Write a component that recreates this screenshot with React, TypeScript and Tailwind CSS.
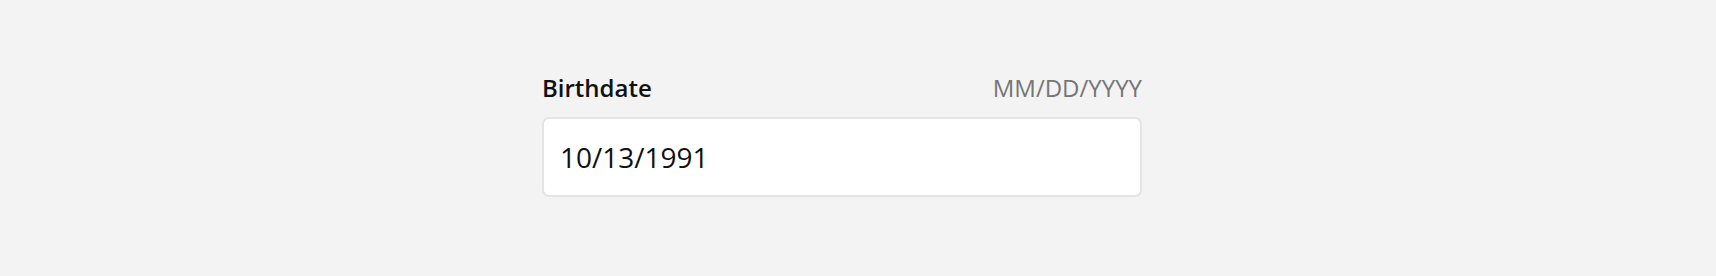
export default function App() {
  return (
    <div className="h-[276px] w-full bg-[#f3f3f3] pl-[542px] pt-[72px] font-['Open_Sans',sans-serif]">
      <div className="w-[600px]">
        <div className="mb-[13px] flex items-center justify-between leading-8">
          <label htmlFor="birthdate" className="text-[24px] font-semibold text-[#111]">
            Birthdate
          </label>
          <span className="text-[24px] text-[#767676]">MM/DD/YYYY</span>
        </div>
        <input
          id="birthdate"
          type="text"
          defaultValue="10/13/1991"
          className="block h-[80px] w-full rounded-[7px] border-2 border-[#e4e4e4] bg-white px-4 text-[28px] text-[#111] outline-none"
        />
      </div>
    </div>
  );
}
